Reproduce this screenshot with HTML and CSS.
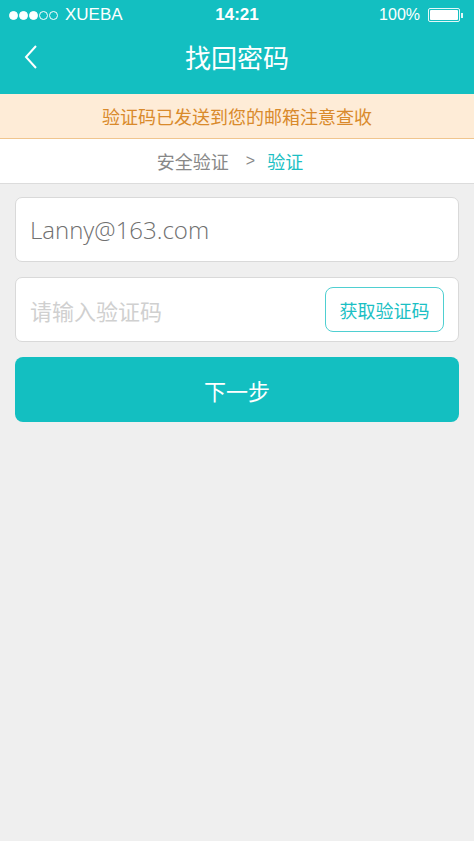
FILE: index.html
```html
<!DOCTYPE html>
<html lang="zh">
<head>
<meta charset="utf-8">
<link rel="stylesheet" href="styles.css">
</head>
<body>
<div class="app">
  <header class="header">
    <div class="status">
      <div class="status-left"><span class="dots"><i class="dot"></i><i class="dot"></i><i class="dot"></i><i class="dot empty"></i><i class="dot empty"></i></span>XUEBA</div>
      <div class="status-time">14:21</div>
      <div class="status-right">100% <span class="battery"><span class="battery-fill"></span></span><span class="battery-tip"></span></div>
    </div>
    <div class="nav">
      <svg class="back" width="14" height="24" viewBox="0 0 14 24"><polyline points="12,1 2,12 12,23" fill="none" stroke="#fff" stroke-width="2"/></svg>
      <h1 class="title">找回密码</h1>
    </div>
  </header>
  <div class="notice">验证码已发送到您的邮箱注意查收</div>
  <div class="crumbs"><span class="crumb">安全验证</span><span class="sep">&gt;</span><span class="crumb active">验证</span></div>
  <main class="form">
    <div class="field"><span class="value">Lanny@163.com</span></div>
    <div class="field code-field"><span class="placeholder">请输入验证码</span><button class="get-code">获取验证码</button></div>
    <button class="next">下一步</button>
  </main>
</div>
</body>
</html>
```

FILE: styles.css
```css
* { box-sizing: border-box; margin: 0; padding: 0; }
html, body { width: 474px; height: 841px; }
body { background: #efefef; font-family: "Noto Sans CJK SC", "Noto Sans", sans-serif; overflow: hidden; }
.app { display: flex; flex-direction: column; }
.header { background: #13bfc1; color: #fff; height: 94px; }
.status { height: 30px; display: flex; align-items: center; justify-content: space-between; padding: 0 11px 0 9px; position: relative; font-family: "Liberation Sans", sans-serif; font-size: 17px; }
.status-left { display: flex; align-items: center; }
.dots { display: flex; gap: 1px; margin-right: 7px; }
.dot { display: block; width: 9px; height: 9px; border-radius: 50%; background: #fff; border: 1px solid #fff; }
.dot.empty { background: transparent; }
.status-time { position: absolute; left: 0; right: 0; text-align: center; font-weight: bold; font-size: 17px; }
.status-right { display: flex; align-items: center; font-size: 16px; }
.battery { display: inline-block; width: 32px; height: 14px; border: 1px solid #e6f8f8; border-radius: 2px; margin-left: 8px; padding: 1px; }
.battery-fill { display: block; width: 100%; height: 100%; background: #fff; border-radius: 1px; }
.battery-tip { display: inline-block; width: 2px; height: 5px; background: #e6f8f8; margin-left: 1px; }
.nav { height: 64px; position: relative; display: flex; align-items: center; justify-content: center; }
.back { position: absolute; left: 24px; top: 15px; }
.title { font-weight: normal; font-size: 26px; line-height: 1; position: relative; top: -5px; }
.notice { height: 45px; background: #feecd7; border-bottom: 1px solid #f0c58e; color: #d98a2b; font-size: 18px; display: flex; align-items: center; justify-content: center; }
.crumbs { height: 45px; background: #fff; border-bottom: 1px solid #dcdcdc; display: flex; align-items: center; justify-content: center; font-size: 18px; color: #888; padding-right: 14px; }
.sep { font-family: "Liberation Sans", sans-serif; font-size: 16px; margin: 0 12px 0 17px; }
.crumb.active { color: #1bbfc4; }
.form { padding: 13px 15px; display: flex; flex-direction: column; gap: 15px; }
.field { height: 65px; background: #fff; border: 1px solid #d9d9d9; border-radius: 7px; display: flex; align-items: center; padding: 0 14px; }
.value { font-family: "Open Sans", "Liberation Sans", sans-serif; font-weight: 300; font-size: 24px; color: #707070; }
.code-field { justify-content: space-between; padding-right: 14px; }
.placeholder { font-size: 22px; color: #d0d0d0; }
.get-code { width: 119px; height: 45px; border: 1px solid #4fcfd1; background: #fff; border-radius: 8px; color: #1bbfc4; font-family: inherit; font-size: 18px; }
.next { height: 65px; border: none; background: #13bfc1; color: #fff; border-radius: 8px; font-family: inherit; font-size: 22px; }
```
